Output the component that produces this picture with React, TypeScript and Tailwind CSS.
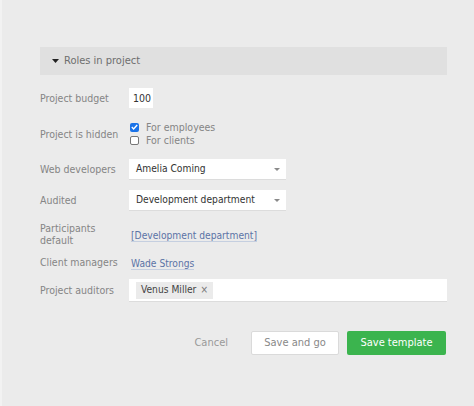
import React from 'react';

const font = { fontFamily: '"DejaVu Sans Condensed", "DejaVu Sans", sans-serif', fontStretch: 'condensed' as const };

function Label({ children }: { children: React.ReactNode }) {
  return <div className="w-[89px] shrink-0 text-[10.5px] leading-[12px] text-[#858585]">{children}</div>;
}

function Select({ value }: { value: string }) {
  return (
    <div className="flex h-[20px] w-[157px] items-center justify-between bg-white pl-[7px] pr-[6px] text-[10.2px] leading-[14px] text-[#333] shadow-[0_1px_0_#dcdcdc]">
      <span>{value}</span>
      <svg width="6" height="3" viewBox="0 0 6 3"><path d="M0 0h6L3 3z" fill="#8a8a8a" /></svg>
    </div>
  );
}

function Check({ checked, label }: { checked?: boolean; label: string }) {
  return (
    <div className="flex h-[13px] items-center gap-[7px] text-[10.5px] leading-[13px] text-[#858585]">
      {checked ? (
        <span className="flex h-[9px] w-[9px] items-center justify-center rounded-[2px] bg-[#1a73e8]">
          <svg width="7" height="6" viewBox="0 0 7 6"><path d="M0.8 3.1l1.8 1.8L6.2 1" stroke="white" strokeWidth="1.4" fill="none" /></svg>
        </span>
      ) : (
        <span className="h-[9px] w-[9px] rounded-[2px] border border-[#777] bg-white" />
      )}
      <span>{label}</span>
    </div>
  );
}

function Link({ children }: { children: React.ReactNode }) {
  return <span className="border-b border-[#c5cfe0] text-[10.2px] leading-[14px] text-[#5b73a6]">{children}</span>;
}

export default function App() {
  return (
    <div style={font} className="h-[406px] w-[474px] border-l-2 border-[#f2f2f2] bg-[#ebebeb] pl-[38px] pr-[27px] pt-[47px]">
      <div className="flex h-[28px] items-center gap-[5px] bg-[#e0e0e0] pl-[12px] text-[11px] leading-[14px] text-[#6e6e6e]">
        <svg width="7" height="4" viewBox="0 0 7 4"><path d="M0 0h7L3.5 4z" fill="#222" /></svg>
        <span>Roles in project</span>
      </div>

      <div className="mt-[13px] flex h-[20px] items-center">
        <Label>Project budget</Label>
        <div className="flex h-[20px] w-[24px] items-center bg-white pl-[4px] text-[10.5px] leading-[14px] text-[#333]">100</div>
      </div>

      <div className="mt-[12px] flex h-[27px] items-center">
        <Label>Project is hidden</Label>
        <div className="flex flex-col pl-[1px]">
          <Check checked label="For employees" />
          <Check label="For clients" />
        </div>
      </div>

      <div className="mt-[12px] flex items-center">
        <Label>Web developers</Label>
        <Select value="Amelia Coming" />
      </div>

      <div className="mt-[11px] flex items-center">
        <Label>Audited</Label>
        <Select value="Development department" />
      </div>

      <div className="mt-[12px] flex h-[23px] items-center">
        <Label>Participants<br />default</Label>
        <div className="pl-[2px]"><Link>[Development department]</Link></div>
      </div>

      <div className="mt-[7px] flex h-[20px] items-center">
        <Label>Client managers</Label>
        <div className="pl-[2px]"><Link>Wade Strongs</Link></div>
      </div>

      <div className="mt-[7px] flex items-center">
        <Label>Project auditors</Label>
        <div className="flex h-[22px] flex-1 items-center bg-white pl-[7px] shadow-[0_1px_0_#dcdcdc]">
          <span className="flex h-[17px] items-center gap-[4px] bg-[#ebebeb] px-[5px] text-[10.2px] leading-[14px] text-[#444]">
            Venus Miller <span className="text-[10px] text-[#777]">×</span>
          </span>
        </div>
      </div>

      <div className="mt-[30px] flex items-center justify-end gap-[8px] pr-[1px]">
        <button className="mr-[15px] text-[11px] leading-[14px] text-[#999]">Cancel</button>
        <button className="h-[24px] w-[88px] rounded-[2px] border border-[#dadada] bg-white text-[11px] leading-[14px] text-[#888]">Save and go</button>
        <button className="h-[24px] w-[99px] rounded-[2px] bg-[#3bb44e] text-[11px] leading-[14px] text-white">Save template</button>
      </div>
    </div>
  );
}
